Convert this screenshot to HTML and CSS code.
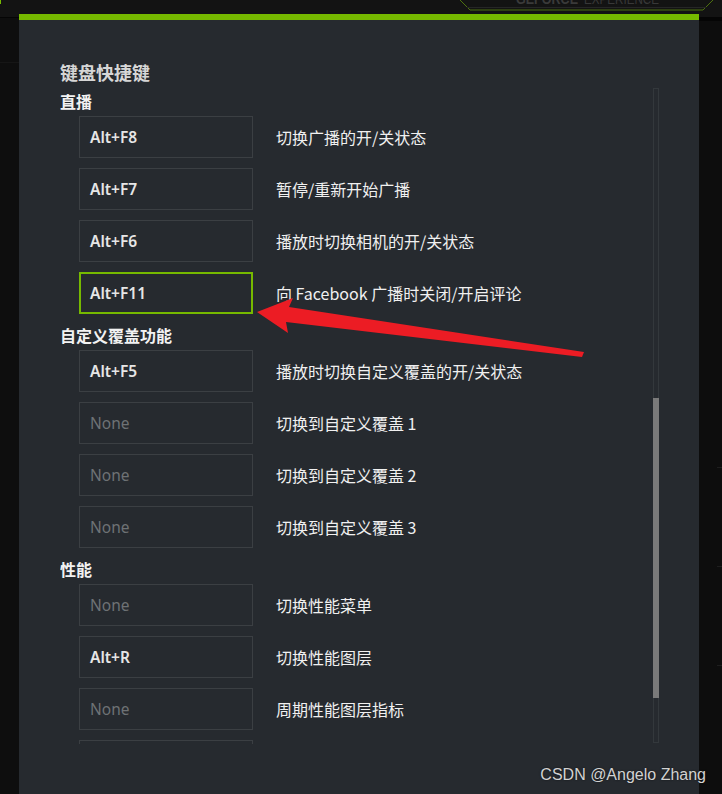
FILE: index.html
```html
<!DOCTYPE html>
<html lang="zh-CN">
<head>
  <meta charset="UTF-8">
  <meta name="viewport" content="width=device-width, initial-scale=1.0">
  <title>键盘快捷键</title>
  <link rel="stylesheet" href="styles.css">
</head>
<body>
    <div class="app">
        <header class="topbar">
            <svg class="logo" width="262" height="17" viewBox="0 0 262 17">
                <polyline points="0,0 10,10 243,10 253,0" fill="none" stroke="#4d7010" stroke-width="1"/>
                <line x1="7" y1="7.5" x2="246" y2="7.5" stroke="#262626" stroke-width="1"/>
                <text x="56" y="4" class="logo-bold" textLength="62" lengthAdjust="spacingAndGlyphs">GEFORCE</text>
                <text x="124" y="4" class="logo-light" textLength="75" lengthAdjust="spacingAndGlyphs">EXPERIENCE</text>
            </svg>
        </header>
        <div class="backdrop">
            <div class="side side-left"></div>
            <div class="side side-right">
                <div class="hline"></div>
                <div class="hline"></div>
                <div class="hline"></div>
            </div>
        </div>
    </div>

    <div class="modal">
        <h1 class="title">键盘快捷键</h1>
        <div class="scroll-area">
            <div class="content">
                <section class="group">
                    <h2>直播</h2>
                    <div class="rows">
                        <div class="row"><div class="key">Alt+F8</div><span class="desc">切换广播的开/关状态</span></div>
                        <div class="row"><div class="key">Alt+F7</div><span class="desc">暂停/重新开始广播</span></div>
                        <div class="row"><div class="key">Alt+F6</div><span class="desc">播放时切换相机的开/关状态</span></div>
                        <div class="row"><div class="key focused">Alt+F11</div><span class="desc">向 Facebook 广播时关闭/开启评论</span></div>
                    </div>
                </section>
                <section class="group">
                    <h2>自定义覆盖功能</h2>
                    <div class="rows">
                        <div class="row"><div class="key">Alt+F5</div><span class="desc">播放时切换自定义覆盖的开/关状态</span></div>
                        <div class="row"><div class="key empty">None</div><span class="desc">切换到自定义覆盖 1</span></div>
                        <div class="row"><div class="key empty">None</div><span class="desc">切换到自定义覆盖 2</span></div>
                        <div class="row"><div class="key empty">None</div><span class="desc">切换到自定义覆盖 3</span></div>
                    </div>
                </section>
                <section class="group">
                    <h2>性能</h2>
                    <div class="rows">
                        <div class="row"><div class="key empty">None</div><span class="desc">切换性能菜单</span></div>
                        <div class="row"><div class="key">Alt+R</div><span class="desc">切换性能图层</span></div>
                        <div class="row"><div class="key empty">None</div><span class="desc">周期性能图层指标</span></div>
                        <div class="row"><div class="key empty"></div></div>
                    </div>
                </section>
            </div>
            <div class="scrollbar">
                <div class="thumb"></div>
            </div>
        </div>
    </div>

    <svg class="arrow" width="722" height="794" viewBox="0 0 722 794">
        <polygon points="257,312 293,298 289,307 584,352 582,357 286,322 288,333" fill="#ec1c24"/>
    </svg>

    <div class="watermark">CSDN @Angelo Zhang</div>
</body>
</html>
```

FILE: styles.css
```css
html, body {
  margin: 0;
  padding: 0;
}
body {
  width: 722px;
  height: 794px;
  overflow: hidden;
  position: relative;
  background: #0e0e0e;
  font-family: 'Noto Sans', 'Noto Sans CJK SC', sans-serif;
}
.app {
  display: flex;
  flex-direction: column;
  height: 100%;
}
.topbar {
  height: 17px;
  background: #131313;
  border-bottom: 1px solid #050505;
  position: relative;
  overflow: hidden;
  flex: none;
}
.topbar::before {
  content: '';
  position: absolute;
  left: 0;
  top: 0;
  width: 1px;
  height: 4px;
  background: #76b900;
}
.logo {
  display: block;
  margin-left: 460px;
}
.logo-bold {
  font-family: 'Liberation Sans', sans-serif;
  font-weight: bold;
  font-size: 15px;
  fill: #3a3a3a;
}
.logo-light {
  font-family: 'Liberation Sans', sans-serif;
  font-size: 15px;
  fill: #383838;
}
.backdrop {
  flex: 1;
  display: flex;
  justify-content: space-between;
}
.side {
  background: #0e0e0e;
}
.side-left {
  width: 19px;
  border-top: 1px solid #161616;
  margin-top: 44px;
}
.side-right {
  width: 23px;
  background: #0d0d0d;
  border-top: 3px solid #050505;
  display: flex;
  flex-direction: column;
  padding-top: 446px;
  gap: 98px;
}
.hline {
  margin-left: 18px;
  height: 1px;
  background: #1e1e1e;
}

.modal {
  position: absolute;
  left: 19px;
  top: 14px;
  width: 680px;
  bottom: 0;
  background: #262a2f;
  border-top: 6px solid #76b900;
  box-sizing: border-box;
  padding: 39px 40px 0 41px;
}
.title {
  margin: 0 0 3px;
  font-family: 'Noto Sans CJK SC', sans-serif;
  font-size: 18px;
  font-weight: bold;
  line-height: 26px;
  color: #d6d6d6;
}
.scroll-area {
  display: flex;
  height: 656px;
}
.content {
  flex: 1;
  overflow: hidden;
  display: flex;
  flex-direction: column;
  gap: 8px;
}
.group h2 {
  margin: 0 0 2px;
  font-family: 'Noto Sans CJK SC', sans-serif;
  font-size: 16px;
  font-weight: bold;
  line-height: 26px;
  color: #f2f2f2;
}
.rows {
  display: flex;
  flex-direction: column;
  gap: 10px;
}
.row {
  display: flex;
  align-items: center;
  flex: none;
}
.key {
  margin-left: 19px;
  width: 174px;
  height: 42px;
  box-sizing: border-box;
  border: 1px solid #3b3f43;
  padding-left: 10px;
  display: flex;
  align-items: center;
  font-size: 15.5px;
  font-weight: 600;
  color: #e6e6e6;
  flex: none;
}
.key.focused {
  border: 2px solid #76b900;
  padding-left: 9px;
}
.key.empty {
  font-weight: normal;
  color: #6e7275;
}
.desc {
  margin-left: 23px;
  font-family: 'Noto Sans CJK SC', sans-serif;
  font-size: 16px;
  color: #f0f0f0;
}
.scrollbar {
  width: 6px;
  height: 655px;
  box-sizing: border-box;
  border: 1px solid #33383c;
  flex: none;
}
.thumb {
  margin: 309px -1px 0;
  height: 300px;
  background: #7a7a7a;
}

.arrow {
  position: absolute;
  left: 0;
  top: 0;
  pointer-events: none;
}
.watermark {
  position: absolute;
  right: 16px;
  bottom: 10px;
  font-family: 'Liberation Sans', Arial, sans-serif;
  font-size: 16px;
  color: #d2d2d2;
  text-shadow: 0 0 2px rgba(0, 0, 0, 0.6);
}
```
